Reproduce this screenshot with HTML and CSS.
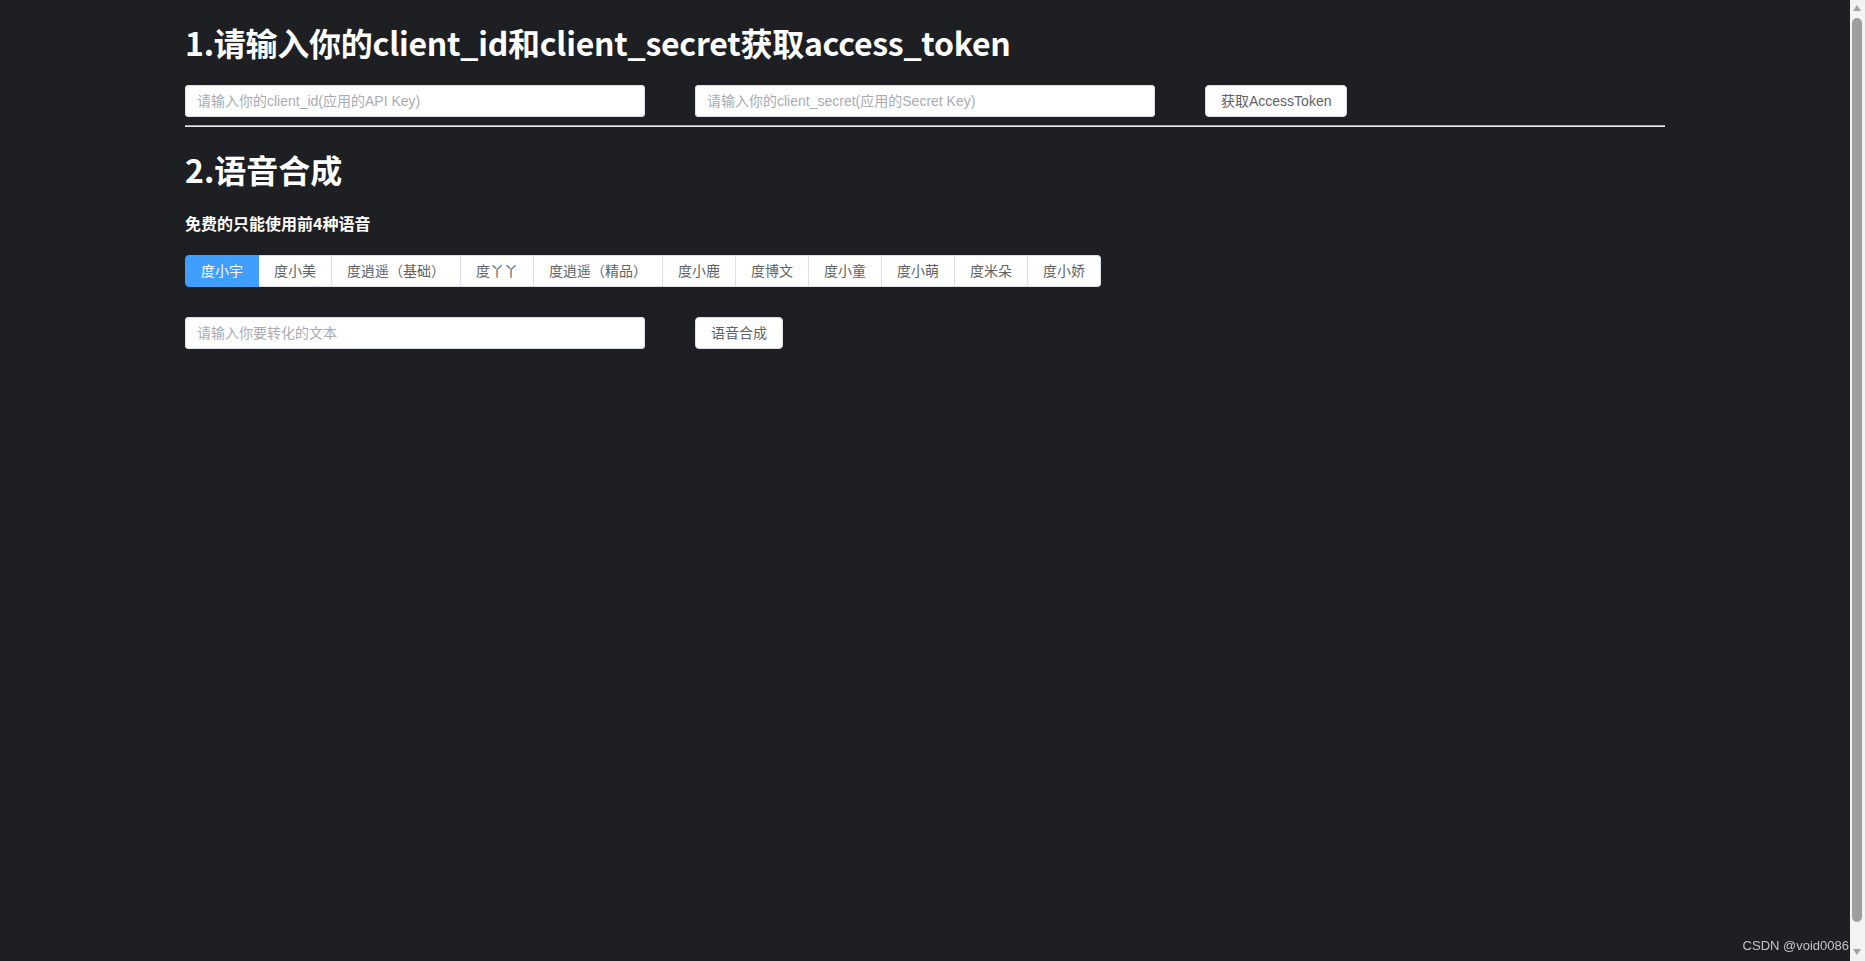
FILE: index.html
```html
<!DOCTYPE html>
<html lang="zh-CN">
<head>
<meta charset="utf-8">
<title>百度语音合成</title>
<link rel="stylesheet" href="styles.css">
</head>
<body>
<div class="page">
  <h1 class="title title-long">1.请输入你的client_id和client_secret获取access_token</h1>
  <div class="row">
    <input class="field" type="text" placeholder="请输入你的client_id(应用的API Key)">
    <input class="field" type="text" placeholder="请输入你的client_secret(应用的Secret Key)">
    <button class="btn" type="button">获取AccessToken</button>
  </div>
  <hr class="divider">
  <h1 class="title">2.语音合成</h1>
  <h4 class="subtitle">免费的只能使用前4种语音</h4>
  <div class="radio-group">
    <span class="radio active">度小宇</span>
    <span class="radio">度小美</span>
    <span class="radio">度逍遥（基础）</span>
    <span class="radio">度丫丫</span>
    <span class="radio">度逍遥（精品）</span>
    <span class="radio">度小鹿</span>
    <span class="radio">度博文</span>
    <span class="radio">度小童</span>
    <span class="radio">度小萌</span>
    <span class="radio">度米朵</span>
    <span class="radio">度小娇</span>
  </div>
  <div class="row row-speech">
    <input class="field" type="text" placeholder="请输入你要转化的文本">
    <button class="btn" type="button">语音合成</button>
  </div>
</div>
<div class="watermark">CSDN @void0086</div>
<div class="scrollbar">
  <span class="arrow arrow-up"></span>
  <span class="thumb"></span>
  <span class="arrow arrow-down"></span>
</div>
</body>
</html>
```

FILE: styles.css
```css
html, body {
  margin: 0;
  padding: 0;
  background: #1e1f23;
  height: 100%;
  overflow: hidden;
}

body {
  padding-right: 15px;
  box-sizing: border-box;
  font-family: "Liberation Sans", "Noto Sans CJK SC", sans-serif;
  color: #ffffff;
}

.page {
  width: 1480px;
  margin: 0 auto;
}

.title {
  font-family: "Noto Sans CJK SC", sans-serif;
  font-size: 32px;
  font-weight: 700;
  line-height: 42px;
  margin: 21.44px 0;
  color: #ffffff;
}

.title-long {
  letter-spacing: -0.25px;
}

.subtitle {
  font-family: "Noto Sans CJK SC", sans-serif;
  font-size: 16px;
  font-weight: 700;
  line-height: 21px;
  margin: 22.5px 0 21.28px;
  color: #ffffff;
}

.row {
  display: flex;
  align-items: center;
  gap: 50px;
}

.row-speech {
  margin-top: 30px;
}

.field {
  width: 460px;
  height: 32px;
  box-sizing: border-box;
  border: none;
  outline: none;
  border-radius: 4px;
  background: #ffffff;
  box-shadow: 0 0 0 1px #dcdfe6 inset;
  padding: 0 12px;
  font-family: "Liberation Sans", "Noto Sans CJK SC", sans-serif;
  font-size: 14px;
  color: #606266;
}

.field::placeholder {
  color: #a8abb2;
}

.btn {
  height: 32px;
  box-sizing: border-box;
  padding: 8px 15px;
  border: 1px solid #dcdfe6;
  border-radius: 4px;
  background: #ffffff;
  color: #606266;
  font-family: "Liberation Sans", "Noto Sans CJK SC", sans-serif;
  font-size: 14px;
  line-height: 1;
  cursor: pointer;
}

.divider {
  margin: 8px 0;
  height: 0;
  border: none;
  border-top: 1px solid #a9a9ab;
  border-bottom: 1px solid #ececec;
}

.radio-group {
  display: inline-flex;
}

.radio {
  display: block;
  padding: 8px 15px;
  border: 1px solid #dcdfe6;
  border-left: none;
  background: #ffffff;
  color: #606266;
  font-family: "Liberation Sans", "Noto Sans CJK SC", sans-serif;
  font-size: 14px;
  line-height: 14px;
  white-space: nowrap;
}

.radio:first-child {
  border-left: 1px solid #dcdfe6;
  border-radius: 4px 0 0 4px;
}

.radio:last-child {
  border-radius: 0 4px 4px 0;
}

.radio.active {
  background: #409eff;
  border-color: #409eff;
  color: #ffffff;
}

.watermark {
  position: fixed;
  right: 16px;
  bottom: 8px;
  font-family: "Liberation Sans", sans-serif;
  font-size: 13px;
  line-height: 15px;
  color: #c4c4c4;
}

.scrollbar {
  position: fixed;
  top: 0;
  right: 0;
  bottom: 0;
  width: 15px;
  background: #f3f3f3;
}

.thumb {
  position: absolute;
  top: 18px;
  bottom: 39px;
  left: 2px;
  width: 10px;
  border-radius: 5px;
  background: #9e9e9e;
}

.arrow {
  position: absolute;
  left: 3px;
  width: 0;
  height: 0;
  border-left: 4.5px solid transparent;
  border-right: 4.5px solid transparent;
}

.arrow-up {
  top: 5px;
  border-bottom: 6px solid #a3a3a3;
}

.arrow-down {
  bottom: 6px;
  border-top: 6px solid #a3a3a3;
}
```
